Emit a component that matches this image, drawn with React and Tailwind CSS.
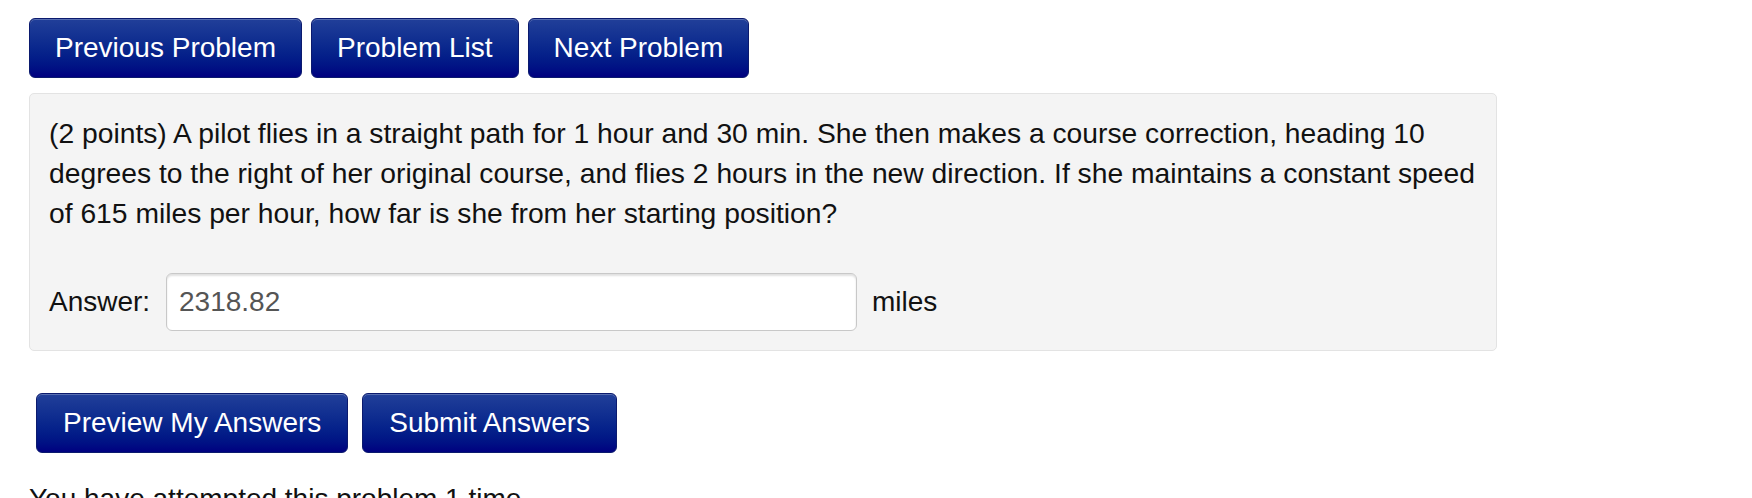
import React from "react";

function Btn({ children, wide }) {
  return (
    <button
      type="button"
      className={
        "h-[60px] flex items-center rounded-[6px] border border-[#0b1a6e] bg-gradient-to-b from-[#213f99] to-[#000080] text-white text-[28px] leading-none shadow-[inset_0_1px_0_rgba(255,255,255,0.25)] whitespace-nowrap " +
        (wide ? "px-[26px]" : "px-[25px]")
      }
    >
      {children}
    </button>
  );
}

export default function App() {
  return (
    <div className="w-[1752px] h-[498px] overflow-hidden bg-white text-[#111] font-['Liberation_Sans',Arial,sans-serif]">
      <div className="pt-[18px] pl-[29px] flex gap-[9px]">
        <Btn>Previous Problem</Btn>
        <Btn>Problem List</Btn>
        <Btn>Next Problem</Btn>
      </div>

      <div className="mt-[15px] ml-[29px] w-[1468px] rounded-[5px] border border-[#e3e3e3] bg-[#f4f4f4] p-[19px] text-[28px] leading-[40px]">
        <p className="whitespace-nowrap text-[28.25px]">
          (2 points) A pilot flies in a straight path for 1 hour and 30 min. She then makes a course correction, heading 10
          <br />
          degrees to the right of her original course, and flies 2 hours in the new direction. If she maintains a constant speed
          <br />
          of 615 miles per hour, how far is she from her starting position?
        </p>
        <div className="mt-[40px] flex items-center h-[58px]">
          <span className="w-[117px] shrink-0">Answer:</span>
          <div className="w-[691px] h-[58px] shrink-0 rounded-[6px] border border-[#c8c8c8] bg-white shadow-[inset_0_2px_2px_rgba(0,0,0,0.12)] flex items-center pl-[12px] text-[#555]">
            2318.82
          </div>
          <span className="ml-[15px]">miles</span>
        </div>
      </div>

      <div className="mt-[42px] pl-[36px] flex gap-[14px]">
        <Btn wide>Preview My Answers</Btn>
        <Btn wide>Submit Answers</Btn>
      </div>

      <p className="mt-[26px] pl-[29px] text-[28px] leading-[40px] whitespace-nowrap">
        You have attempted this problem 1 time.
      </p>
    </div>
  );
}
